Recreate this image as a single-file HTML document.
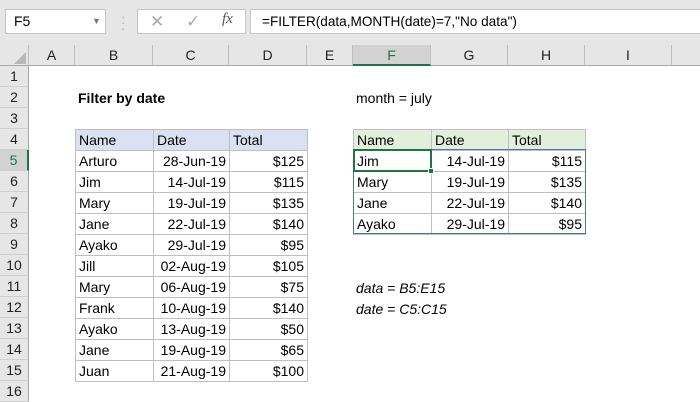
<!DOCTYPE html>
<html><head><meta charset="utf-8"><style>
*{margin:0;padding:0;box-sizing:border-box}
body{width:700px;height:400px;overflow:hidden;background:#fff;font-family:"Liberation Sans",sans-serif;font-size:14px;color:#000;position:relative}
.a{position:absolute}
.top{left:0;top:0;width:700px;height:45px;background:#e6e6e6}
.box{background:#fff;border:1px solid #c6c6c6;height:25px;top:9px}
.ch{top:45px;height:21px;background:#e6e6e6;border-right:1px solid #bdbdbd;border-bottom:1px solid #a8a8a8;text-align:center;line-height:20px;font-size:14px;color:#222}
.rh{left:0;width:29px;height:21px;background:#e6e6e6;border-right:1px solid #a8a8a8;border-bottom:1px solid #d0d0d0;text-align:center;line-height:21px;font-size:14px;color:#222}
table{position:absolute;border-collapse:collapse;table-layout:fixed}
td{height:21px;border:1px solid #bfbfbf;padding:0 3px;line-height:19px;font-size:14px;white-space:nowrap;overflow:hidden}
td.r{text-align:right}
.hb td{background:#d9e1f2}
.hg td{background:#e2efda}
</style></head><body>
<div class="a top"></div>
<div class="a box" style="left:5px;width:101px;padding-left:8px;line-height:23px">F5</div>
<div class="a" style="left:92px;top:16px;font-size:9px;color:#777">▼</div>
<div class="a" style="left:121px;top:14px;color:#aaa;font-size:13px;line-height:6px">·<br>·<br>·</div>
<div class="a box" style="left:137px;width:109px"></div>
<div class="a" style="left:150px;top:12px;color:#aaa;font-size:17px">✕</div>
<div class="a" style="left:186px;top:12px;color:#aaa;font-size:17px">✓</div>
<div class="a" style="left:222px;top:11px;color:#555;font-family:'Liberation Serif',serif;font-style:italic;font-size:15px">fx</div>
<div class="a box" style="left:250px;width:460px;padding-left:11px;line-height:23px;font-size:13.6px">=FILTER(data,MONTH(date)=7,"No data")</div>

<div class="a ch" style="left:0;width:29px"></div>
<div class="a" style="left:14px;top:52px;width:0;height:0;border-left:12px solid transparent;border-bottom:12px solid #b8b8b8"></div>
<div class="a ch" style="left:29px;width:46px">A</div>
<div class="a ch" style="left:75px;width:78px">B</div>
<div class="a ch" style="left:153px;width:76px">C</div>
<div class="a ch" style="left:229px;width:78px">D</div>
<div class="a ch" style="left:307px;width:46px">E</div>
<div class="a ch" style="left:353px;width:78px;background:#d2d2d2;color:#217346;border-bottom:2px solid #217346">F</div>
<div class="a ch" style="left:431px;width:77px">G</div>
<div class="a ch" style="left:508px;width:77px">H</div>
<div class="a ch" style="left:585px;width:87px">I</div>
<div class="a ch" style="left:672px;width:40px"></div>

<div class="a rh" style="top:66px">1</div>
<div class="a rh" style="top:87px">2</div>
<div class="a rh" style="top:108px">3</div>
<div class="a rh" style="top:129px">4</div>
<div class="a rh" style="top:150px;background:#d2d2d2;color:#217346;border-right:2px solid #217346">5</div>
<div class="a rh" style="top:171px">6</div>
<div class="a rh" style="top:192px">7</div>
<div class="a rh" style="top:213px">8</div>
<div class="a rh" style="top:234px">9</div>
<div class="a rh" style="top:255px">10</div>
<div class="a rh" style="top:276px">11</div>
<div class="a rh" style="top:297px">12</div>
<div class="a rh" style="top:318px">13</div>
<div class="a rh" style="top:339px">14</div>
<div class="a rh" style="top:360px">15</div>
<div class="a rh" style="top:381px">16</div>

<div class="a" style="left:78px;top:90px;font-weight:bold">Filter by date</div>
<div class="a" style="left:356px;top:90px">month = july</div>
<div class="a" style="left:356px;top:280px;font-style:italic">data = B5:E15</div>
<div class="a" style="left:356px;top:301px;font-style:italic">date = C5:C15</div>

<table style="left:75px;top:129px;width:232px">
<colgroup><col style="width:78px"><col style="width:76px"><col style="width:78px"></colgroup>
<tr class="hb"><td>Name</td><td>Date</td><td>Total</td></tr>
<tr><td>Arturo</td><td class="r">28-Jun-19</td><td class="r">$125</td></tr>
<tr><td>Jim</td><td class="r">14-Jul-19</td><td class="r">$115</td></tr>
<tr><td>Mary</td><td class="r">19-Jul-19</td><td class="r">$135</td></tr>
<tr><td>Jane</td><td class="r">22-Jul-19</td><td class="r">$140</td></tr>
<tr><td>Ayako</td><td class="r">29-Jul-19</td><td class="r">$95</td></tr>
<tr><td>Jill</td><td class="r">02-Aug-19</td><td class="r">$105</td></tr>
<tr><td>Mary</td><td class="r">06-Aug-19</td><td class="r">$75</td></tr>
<tr><td>Frank</td><td class="r">10-Aug-19</td><td class="r">$140</td></tr>
<tr><td>Ayako</td><td class="r">13-Aug-19</td><td class="r">$50</td></tr>
<tr><td>Jane</td><td class="r">19-Aug-19</td><td class="r">$65</td></tr>
<tr><td>Juan</td><td class="r">21-Aug-19</td><td class="r">$100</td></tr>
</table>

<table style="left:353px;top:129px;width:232px">
<colgroup><col style="width:78px"><col style="width:77px"><col style="width:77px"></colgroup>
<tr class="hg"><td>Name</td><td>Date</td><td>Total</td></tr>
<tr><td>Jim</td><td class="r">14-Jul-19</td><td class="r">$115</td></tr>
<tr><td>Mary</td><td class="r">19-Jul-19</td><td class="r">$135</td></tr>
<tr><td>Jane</td><td class="r">22-Jul-19</td><td class="r">$140</td></tr>
<tr><td>Ayako</td><td class="r">29-Jul-19</td><td class="r">$95</td></tr>
</table>
<div class="a" style="left:353px;top:149px;width:233px;height:85px;border:1px solid #4472c4"></div>
<div class="a" style="left:353px;top:149px;width:79px;height:23px;border:2px solid #217346"></div>
<div class="a" style="left:428px;top:168px;width:6px;height:6px;background:#217346;border:1px solid #fff"></div>
</body></html>
